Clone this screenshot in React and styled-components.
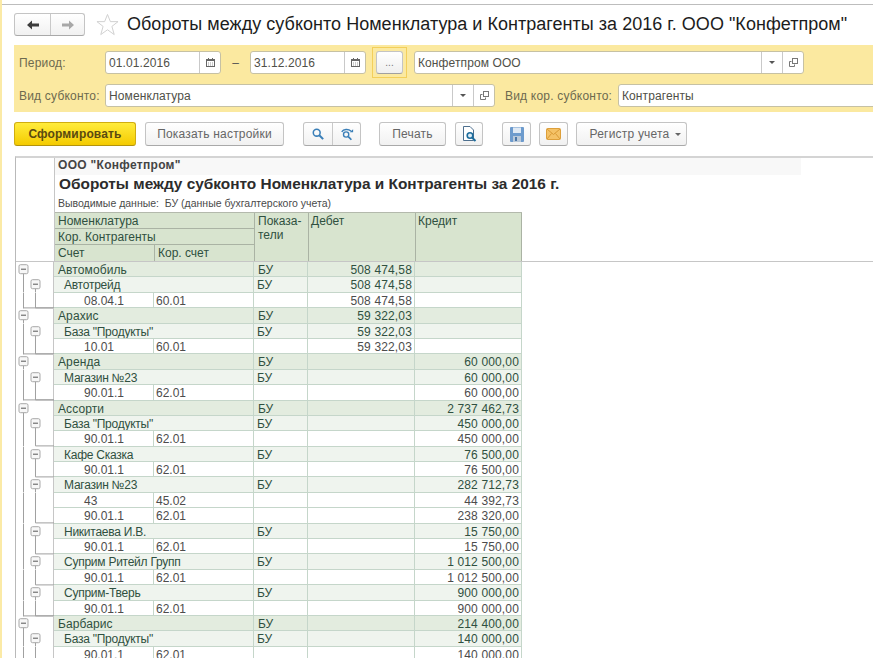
import React from "react";
import styled, { createGlobalStyle } from "styled-components";

const GlobalStyle = createGlobalStyle`
  html, body { margin: 0; padding: 0; background: #fff; }
  body { font-family: "Liberation Sans", Arial, sans-serif; color: #333; }
`;

const Page = styled.div`
  width: 873px;
  height: 658px;
  overflow: hidden;
  box-sizing: border-box;
  background: #fff;
  border-left: 2px solid #fbeaa6;
  padding-top: 4px;
`;

const Window = styled.div`
  border-top: 1px solid #bdbdbd;
  padding: 8px 0 0 12px;
`;

const TitleBar = styled.div`
  display: flex;
  align-items: center;
  height: 23px;
`;

const ButtonGroup = styled.div`
  display: flex;
  height: ${(p) => p.$height || 24}px;
  margin-left: ${(p) => p.$left || 0}px;
  border: 1px solid #c4c4c4;
  border-bottom-color: #a9a9a9;
  border-radius: 3px;
  background: linear-gradient(#ffffff, #f1f1f1);
  box-sizing: border-box;
  flex: none;
`;

const GroupItem = styled.div`
  width: ${(p) => p.$width}px;
  display: flex;
  align-items: center;
  justify-content: center;
  & + & { border-left: 1px solid #c9c9c9; }
`;

const StarIcon = styled.svg`
  width: 23px;
  height: 23px;
  margin: 0 8px 0 11px;
  flex: none;
`;

const PageTitle = styled.h1`
  margin: 0;
  font-size: 18px;
  font-weight: 400;
  color: #1c1c1c;
  white-space: nowrap;
  letter-spacing: 0.03px;
`;

const FilterPanel = styled.div`
  margin-top: 9px;
  height: 67px;
  background: #fbe9a0;
  padding: 6px 0 0 5px;
  box-sizing: border-box;
  overflow: hidden;
`;

const FilterRow = styled.div`
  display: flex;
  align-items: center;
  height: 23px;
  white-space: nowrap;
  & + & { margin-top: 10px; }
`;

const Label = styled.span`
  width: ${(p) => p.$width}px;
  margin-left: ${(p) => p.$left || 0}px;
  padding-top: 1px;
  font-size: 12px;
  color: #6d6a4f;
  letter-spacing: 0.2px;
  flex: none;
`;

const Field = styled.div`
  display: flex;
  width: ${(p) => p.$width}px;
  height: 23px;
  box-sizing: border-box;
  margin-left: ${(p) => p.$left || 0}px;
  background: #fff;
  border: 1px solid #c6c1a4;
  border-radius: 3px;
  flex: none;
`;

const FieldText = styled.div`
  flex: 1;
  font-size: 12px;
  line-height: 23px;
  padding-left: 3px;
  color: #505048;
  letter-spacing: 0.1px;
`;

const FieldButton = styled.div`
  width: 20px;
  display: flex;
  align-items: center;
  justify-content: center;
  border-left: 1px solid #c9c9c9;
  flex: none;
`;

const Dash = styled.span`
  width: 29px;
  text-align: center;
  font-size: 12px;
  color: #555;
  flex: none;
`;

const MoreFrame = styled.div`
  width: 35px;
  height: 31px;
  margin-left: 6px;
  box-sizing: border-box;
  border: 1px solid #f3cf5b;
  padding: 3px;
  flex: none;
`;

const MoreButton = styled.div`
  height: 23px;
  box-sizing: border-box;
  border: 1px solid #c4c4c4;
  border-bottom-color: #a0a0a0;
  border-radius: 3px;
  background: linear-gradient(#ffffff, #efefef);
  text-align: center;
  font-size: 10px;
  line-height: 22px;
  color: #777;
`;

const Toolbar = styled.div`
  display: flex;
  align-items: center;
  height: 24px;
  margin-top: 10px;
`;

const ToolButton = styled.div`
  width: ${(p) => p.$width}px;
  height: 24px;
  margin-left: ${(p) => p.$left || 0}px;
  padding-left: ${(p) => p.$pad || 0}px;
  box-sizing: border-box;
  display: flex;
  align-items: center;
  justify-content: center;
  gap: 6px;
  border: 1px solid #c4c4c4;
  border-bottom-color: #a9a9a9;
  border-radius: 3px;
  background: linear-gradient(#ffffff, #f1f1f1);
  font-size: 12px;
  color: #666;
  letter-spacing: 0.2px;
  flex: none;
`;

const PrimaryButton = styled(ToolButton)`
  border-color: #d0ad10;
  border-bottom-color: #b3930c;
  background: linear-gradient(#ffec3c, #f4cb00);
  color: #5a4a10;
  font-weight: 700;
  letter-spacing: 0.15px;
`;

const Caret = styled.span`
  width: 0;
  height: 0;
  border-left: 3px solid transparent;
  border-right: 3px solid transparent;
  border-top: 3px solid ${(p) => p.$color || "#666"};
`;

const Sheet = styled.div`
  margin: 10px 0 0 1px;
  border-top: 2px solid #d4d4d4;
  border-left: 1px solid #b9b9b9;
`;

const SheetHead = styled.div`
  display: grid;
  grid-template-columns: 38px 1fr;
  border-bottom: 1px solid #c6c6c6;
`;

const HeadContent = styled.div`
  border-left: 1px solid #c6c6c6;
`;

const OrgName = styled.div`
  width: 746px;
  height: 17px;
  background: #f8f8f8;
  padding-left: 3px;
  font-size: 12px;
  font-weight: 700;
  line-height: 15px;
  letter-spacing: 0.3px;
  color: #444;
  box-sizing: border-box;
`;

const ReportTitle = styled.div`
  height: 20px;
  padding: 0 0 0 4px;
  font-size: 15.4px;
  font-weight: 700;
  line-height: 18px;
  color: #2c2c2c;
  box-sizing: border-box;
`;

const ReportNote = styled.div`
  height: 17px;
  padding-left: 3px;
  font-size: 10.5px;
  line-height: 16px;
  color: #4a4a4a;
`;

const HeaderGrid = styled.div`
  display: grid;
  width: 467px;
  grid-template-columns: 100px 100px 54px 107px 106px;
  grid-template-rows: 16px 16px 16px;
  background: #d8e4cf;
  border-top: 1px solid #b3b9ac;
`;

const HeaderCell = styled.div`
  grid-column: ${(p) => p.$column};
  grid-row: ${(p) => p.$row};
  padding: 1px 0 0 ${(p) => p.$pad || 3}px;
  font-size: 12px;
  line-height: 14px;
  color: #2f5040;
  box-sizing: border-box;
  border-right: 1px solid #aab3a4;
  border-bottom: ${(p) => (p.$last ? "none" : "1px solid #aab3a4")};
`;

const BodyRow = styled.div`
  display: grid;
  grid-template-columns: 38px 100px 100px 54px 107px 107px;
  height: 15.4px;
  font-size: 12px;
  line-height: 17px;
  color: ${(p) => (p.$level === 2 ? "#4c4c4c" : "#2f5040")};
`;

const TreeCell = styled.div`
  height: 15.4px;
  border-right: 1px solid #c6c6c6;
`;

const TreeDrawing = styled.svg`
  display: block;
  width: 38px;
  height: 15.4px;
  overflow: visible;
`;

const rowBackground = ["#e3ecdf", "#eff4ee", "#ffffff"];

const DataCell = styled.div`
  grid-column: span ${(p) => p.$span || 1};
  background: ${(p) => rowBackground[p.$level]};
  border-right: 1px solid #c5d6ca;
  border-bottom: 1px solid #c5d6ca;
  padding: 0 ${(p) => (p.$right ? 2 : 0)}px 0 ${(p) => p.$indent || 0}px;
  text-align: ${(p) => (p.$right ? "right" : "left")};
  letter-spacing: ${(p) => p.$spacing || 0}px;
  white-space: nowrap;
  overflow: hidden;
  box-sizing: border-box;
`;

const ArrowIcon = ({ dark, flip }) => (
  <svg width="14" height="12" viewBox="0 0 14 12" style={{ transform: flip ? "scaleX(-1)" : "none" }}>
    <path d="M1 6 L6 1.5 V4.5 H13 V7.5 H6 V10.5 Z" fill={dark ? "#3d3d3d" : "#a8a8a8"} />
  </svg>
);

const CalendarIcon = () => (
  <svg width="9" height="9" viewBox="0 0 9 9">
    <rect x="0.5" y="1.5" width="8" height="7" fill="none" stroke="#666" />
    <rect x="0.5" y="1" width="8" height="2" fill="#666" />
    <path d="M2.5 0v2M6.5 0v2" stroke="#666" />
    <path d="M2 5h5M2 7h5" stroke="#999" strokeDasharray="1 1" />
  </svg>
);

const DropIcon = () => <Caret $color="#555" />;

const OpenIcon = () => (
  <svg width="9" height="9" viewBox="0 0 9 9" fill="none" stroke="#777">
    <rect x="3.5" y="0.5" width="5" height="5" />
    <path d="M2.5 3.5H0.5V8.5H5.5V6.5" />
  </svg>
);

const SearchIcon = () => (
  <svg width="12" height="12" viewBox="0 0 14 14" fill="none" stroke="#3a7fb8" strokeWidth="1.8">
    <circle cx="5.5" cy="5.5" r="4" />
    <path d="M8.5 8.5L13 13" strokeWidth="2.4" />
  </svg>
);

const SearchRepeatIcon = () => (
  <svg width="14" height="13" viewBox="0 0 16 14" fill="none" stroke="#3a7fb8" strokeWidth="1.6">
    <circle cx="7" cy="7" r="3" />
    <path d="M9.5 9.5L13 13" strokeWidth="2" />
    <path d="M2 4C4 0.8 9.5 0.5 12.5 3" />
    <path d="M11 4.5H15V1" fill="#3a7fb8" stroke="none" />
  </svg>
);

const PreviewIcon = () => (
  <svg width="15" height="16" viewBox="0 0 15 16">
    <path d="M1.5 0.5H8L11.5 4V14.5H1.5Z" fill="#fff" stroke="#4d6f8e" />
    <circle cx="8" cy="9.5" r="2.8" fill="#dcecf7" stroke="#1d6c9c" strokeWidth="1.6" />
    <path d="M10 11.5L13.5 15" stroke="#1d6c9c" strokeWidth="2" />
  </svg>
);

const SaveIcon = () => (
  <svg width="14" height="15" viewBox="0 0 14 15">
    <rect x="0" y="0" width="14" height="15" rx="1" fill="#6d9bcd" />
    <rect x="3" y="0.5" width="8" height="5.5" fill="#dfe9f4" />
    <rect x="3" y="9" width="8" height="6" fill="#b9c9da" />
    <rect x="5" y="10" width="2" height="4" fill="#4b76a6" />
  </svg>
);

const MailIcon = () => (
  <svg width="15" height="12" viewBox="0 0 15 12">
    <rect x="0.5" y="0.5" width="14" height="11" rx="1" fill="#f4c267" stroke="#dd9f3a" />
    <path d="M1 1L7.5 6.5L14 1M1 11L5.5 5.5M14 11L9.5 5.5" fill="none" stroke="#d99a35" />
  </svg>
);

const Toggle = ({ x, y }) => (
  <>
    <rect x={x - 4.5} y={y - 4.5} width="9" height="9" rx="1.5" fill="#f7f7f7" stroke="#a8a8a8" />
    <path d={`M${x - 2.5} ${y}H${x + 2.5}`} stroke="#555" />
  </>
);

const TreeLines = ({ row, next }) => {
  const outerX = 7.5;
  const innerX = 19.5;
  const h = 15.4;
  const mid = 7.2;
  const stroke = "#a0a0a0";
  const level = row.level;
  const lastInner = level === 2 && (!next || next.level < 2);
  const lastOuter = level === 2 && next && next.level === 0;
  return (
    <TreeDrawing viewBox={`0 0 38 ${h}`}>
      {level === 0 && <path d={`M${outerX} ${mid}V${h}`} stroke={stroke} />}
      {level > 0 && <path d={`M${outerX} 0V${h}`} stroke={stroke} />}
      {level === 1 && <path d={`M${innerX} ${mid}V${h}`} stroke={stroke} />}
      {level === 2 && <path d={`M${innerX} 0V${lastInner ? h - 0.5 : h}`} stroke={stroke} />}
      {lastInner && <path d={`M${innerX} ${h - 0.5}H38`} stroke={stroke} />}
      {lastOuter && <path d={`M${outerX} ${h - 0.5}H38`} stroke={stroke} />}
      {level === 0 && <Toggle x={outerX} y={mid} />}
      {level === 1 && <Toggle x={innerX} y={mid} />}
    </TreeDrawing>
  );
};

const group = (name, amount, side) => ({ level: 0, name, amount, side });
const partner = (name, amount, side) => ({ level: 1, name, amount, side });
const entry = (account, corr, amount, side) => ({ level: 2, account, corr, amount, side });

const rows = [
  group("Автомобиль", "508 474,58", "debit"),
  partner("Автотрейд", "508 474,58", "debit"),
  entry("08.04.1", "60.01", "508 474,58", "debit"),
  group("Арахис", "59 322,03", "debit"),
  partner('База "Продукты"', "59 322,03", "debit"),
  entry("10.01", "60.01", "59 322,03", "debit"),
  group("Аренда", "60 000,00", "credit"),
  partner("Магазин №23", "60 000,00", "credit"),
  entry("90.01.1", "62.01", "60 000,00", "credit"),
  group("Ассорти", "2 737 462,73", "credit"),
  partner('База "Продукты"', "450 000,00", "credit"),
  entry("90.01.1", "62.01", "450 000,00", "credit"),
  partner("Кафе Сказка", "76 500,00", "credit"),
  entry("90.01.1", "62.01", "76 500,00", "credit"),
  partner("Магазин №23", "282 712,73", "credit"),
  entry("43", "45.02", "44 392,73", "credit"),
  entry("90.01.1", "62.01", "238 320,00", "credit"),
  partner("Никитаева И.В.", "15 750,00", "credit"),
  entry("90.01.1", "62.01", "15 750,00", "credit"),
  partner("Суприм Ритейл Групп", "1 012 500,00", "credit"),
  entry("90.01.1", "62.01", "1 012 500,00", "credit"),
  partner("Суприм-Тверь", "900 000,00", "credit"),
  entry("90.01.1", "62.01", "900 000,00", "credit"),
  group("Барбарис", "214 400,00", "credit"),
  partner('База "Продукты"', "140 000,00", "credit"),
  entry("90.01.1", "62.01", "140 000,00", "credit"),
];

const ReportRow = ({ row, next }) => {
  const { level } = row;
  return (
    <BodyRow $level={level}>
      <TreeCell>
        <TreeLines row={row} next={next} />
      </TreeCell>
      {level < 2 ? (
        <DataCell $level={level} $span={2} $indent={level === 0 ? 4 : 10} $spacing={level === 0 ? 0.1 : -0.25}>
          {row.name}
        </DataCell>
      ) : (
        <>
          <DataCell $level={level} $indent={30}>{row.account}</DataCell>
          <DataCell $level={level} $indent={2}>{row.corr}</DataCell>
        </>
      )}
      <DataCell $level={level} $indent={level === 0 ? 4 : 3}>{level < 2 ? "БУ" : ""}</DataCell>
      <DataCell $level={level} $right $spacing={0.15}>{row.side === "debit" ? row.amount : ""}</DataCell>
      <DataCell $level={level} $right $spacing={0.15}>{row.side === "credit" ? row.amount : ""}</DataCell>
    </BodyRow>
  );
};

export default function App() {
  return (
    <Page>
      <GlobalStyle />
      <Window>
        <TitleBar>
          <ButtonGroup $height={23}>
            <GroupItem $width={35}><ArrowIcon dark /></GroupItem>
            <GroupItem $width={33}><ArrowIcon flip /></GroupItem>
          </ButtonGroup>
          <StarIcon viewBox="0 0 24 24" fill="#fff" stroke="#cfcfcf" strokeWidth="1">
            <path d="M12 1.5L15 9H23L16.6 14L19 22.5L12 17.5L5 22.5L7.4 14L1 9H9Z" />
          </StarIcon>
          <PageTitle>Обороты между субконто Номенклатура и Контрагенты за 2016 г. ООО "Конфетпром"</PageTitle>
        </TitleBar>

        <FilterPanel>
          <FilterRow>
            <Label $width={86}>Период:</Label>
            <Field $width={116}>
              <FieldText>01.01.2016</FieldText>
              <FieldButton><CalendarIcon /></FieldButton>
            </Field>
            <Dash>–</Dash>
            <Field $width={116}>
              <FieldText>31.12.2016</FieldText>
              <FieldButton><CalendarIcon /></FieldButton>
            </Field>
            <MoreFrame><MoreButton>...</MoreButton></MoreFrame>
            <Field $width={390} $left={7}>
              <FieldText>Конфетпром ООО</FieldText>
              <FieldButton><DropIcon /></FieldButton>
              <FieldButton><OpenIcon /></FieldButton>
            </Field>
          </FilterRow>
          <FilterRow>
            <Label $width={86}>Вид субконто:</Label>
            <Field $width={390}>
              <FieldText>Номенклатура</FieldText>
              <FieldButton><DropIcon /></FieldButton>
              <FieldButton><OpenIcon /></FieldButton>
            </Field>
            <Label $width={113} $left={10}>Вид кор. субконто:</Label>
            <Field $width={300}>
              <FieldText>Контрагенты</FieldText>
            </Field>
          </FilterRow>
        </FilterPanel>

        <Toolbar>
          <PrimaryButton $width={122}>Сформировать</PrimaryButton>
          <ToolButton $width={139} $left={9}>Показать настройки</ToolButton>
          <ButtonGroup $left={19}>
            <GroupItem $width={28}><SearchIcon /></GroupItem>
            <GroupItem $width={27}><SearchRepeatIcon /></GroupItem>
          </ButtonGroup>
          <ToolButton $width={67} $left={18}>Печать</ToolButton>
          <ToolButton $width={28} $left={9}><PreviewIcon /></ToolButton>
          <ToolButton $width={29} $left={19}><SaveIcon /></ToolButton>
          <ToolButton $width={29} $left={8}><MailIcon /></ToolButton>
          <ToolButton $width={111} $left={8} $pad={8}>Регистр учета <Caret /></ToolButton>
        </Toolbar>

        <Sheet>
          <SheetHead>
            <div />
            <HeadContent>
              <OrgName>ООО "Конфетпром"</OrgName>
              <ReportTitle>Обороты между субконто Номенклатура и Контрагенты за 2016 г.</ReportTitle>
              <ReportNote>Выводимые данные:&nbsp; БУ (данные бухгалтерского учета)</ReportNote>
              <HeaderGrid>
                <HeaderCell $column="1 / span 2" $row="1">Номенклатура</HeaderCell>
                <HeaderCell $column="1 / span 2" $row="2">Кор. Контрагенты</HeaderCell>
                <HeaderCell $column="1" $row="3" $last>Счет</HeaderCell>
                <HeaderCell $column="2" $row="3" $last>Кор. счет</HeaderCell>
                <HeaderCell $column="3" $row="1 / span 3" $last>Показа-<br />тели</HeaderCell>
                <HeaderCell $column="4" $row="1 / span 3" $last $pad={2}>Дебет</HeaderCell>
                <HeaderCell $column="5" $row="1 / span 3" $last $pad={2}>Кредит</HeaderCell>
              </HeaderGrid>
            </HeadContent>
          </SheetHead>
          {rows.map((row, i) => (
            <ReportRow key={i} row={row} next={rows[i + 1]} />
          ))}
        </Sheet>
      </Window>
    </Page>
  );
}
